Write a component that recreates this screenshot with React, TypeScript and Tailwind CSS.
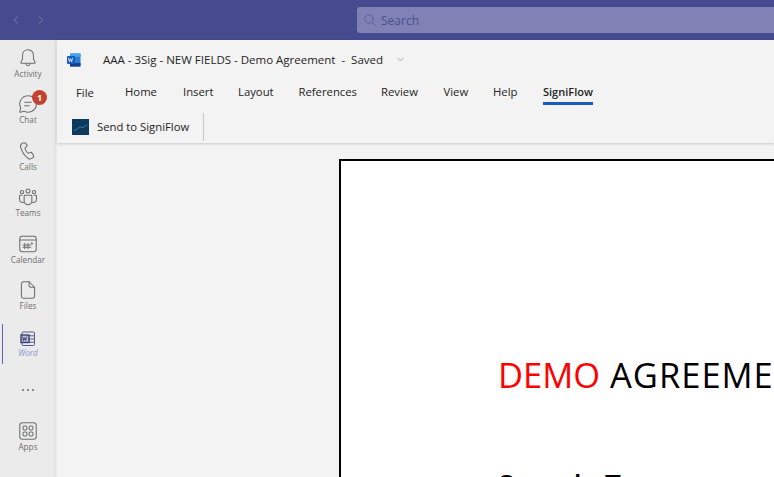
import React from 'react';
import { ChevronLeft, ChevronRight, ChevronDown } from 'lucide-react';

const NavIcon: React.FC<{ name: string }> = ({ name }) => {
  const common = {
    width: 22,
    height: 22,
    viewBox: '0 0 20 20',
    fill: 'none',
    stroke: '#6e6e6e',
    strokeWidth: 0.95,
    strokeLinecap: 'round' as const,
    strokeLinejoin: 'round' as const,
  };
  switch (name) {
    case 'Activity':
      return (
        <svg {...common}>
          <path d="M10 2.500c-3 0-5 2.300-5 5.200v3.300l-1.600 3.200c-.1.300.1.600.4.600h12.400c.3 0 .5-.3.4-.6L15 11V7.700c0-2.900-2-5.200-5-5.200z" />
          <path d="M8 15c.2 1.200 1 2 2 2s1.800-.8 2-2" />
        </svg>
      );
    case 'Chat':
      return (
        <svg {...common}>
          <path d="M10 2.500a7.500 7.500 0 0 0-6.600 11l-.9 3.600c-.1.300.2.500.4.400l3.600-1A7.500 7.500 0 1 0 10 2.500z" />
          <path d="M7 8.500h6M7 11.500h4" />
        </svg>
      );
    case 'Calls':
      return (
        <svg {...common}>
          <path d="M6 2.600 4.600 3.200C3.400 3.800 3 5 3.300 6.300c.8 3.600 3.700 8.100 6.700 10.300 1.100.8 2.400.9 3.400.1l1.300-1c.6-.5.7-1.300.3-1.900l-1.300-1.900c-.4-.6-1.100-.8-1.700-.5l-1.300.5c-.4.2-.9 0-1.200-.3-.9-1.100-1.700-2.400-2.200-3.800-.1-.4 0-.9.400-1.100l1-.8c.5-.4.700-1.100.4-1.700L7.900 3.300C7.500 2.700 6.700 2.300 6 2.600z" />
        </svg>
      );
    case 'Teams':
      return (
        <svg {...common}>
          <circle cx="10" cy="4.500" r="1.800" />
          <circle cx="4.500" cy="5.500" r="1.500" />
          <circle cx="15.500" cy="5.500" r="1.500" />
          <path d="M7 8.500h6a.5.5 0 0 1 .5.500v4.500a3.500 3.500 0 0 1-7 0V9a.5.5 0 0 1 .5-.500z" />
          <path d="M4.500 8.500H2.800a.5.5 0 0 0-.5.500v3.200a2.800 2.800 0 0 0 3.700 2.600M15.500 8.500h1.700a.5.5 0 0 1 .5.500v3.200a2.800 2.800 0 0 1-3.700 2.600" />
        </svg>
      );
    case 'Calendar':
      return (
        <svg {...common}>
          <rect x="2.500" y="3" width="15" height="14" rx="2.200" />
          <path d="M2.500 6.300h15" />
          <path d="M7 9.500v4.500M10 9.500v4.500M5.500 11h7M5.500 13h7" />
          <circle cx="13.500" cy="9.500" r=".5" fill="#6e6e6e" />
        </svg>
      );
    case 'Files':
      return (
        <svg {...common}>
          <path d="M6 2.500h5l5 5v8a2 2 0 0 1-2 2H6a2 2 0 0 1-2-2v-11a2 2 0 0 1 2-2z" />
          <path d="M11 2.500v3.500a1.500 1.500 0 0 0 1.500 1.500H16" />
        </svg>
      );
    case 'Word':
      return (
        <svg width="20" height="20" viewBox="0 0 20 20" fill="none">
          <rect x="4" y="3" width="12.500" height="13.500" rx="1" stroke="#55598f" strokeWidth="1" />
          <path d="M10 6.800h6.500M10 10h6.500M10 13.200h6.500" stroke="#55598f" strokeWidth="1" />
          <rect x="3" y="6" width="8" height="7.500" fill="#b9bcd9" stroke="#33366f" strokeWidth="1.300" />
          <path d="M4.500 7.800l1 3.800 1-2.800 1 2.800 1-3.800" stroke="#33366f" strokeWidth=".9" />
        </svg>
      );
    default:
      return (
        <svg {...common}>
          <rect x="2.500" y="2.500" width="15" height="15" rx="2.500" />
          <rect x="5.500" y="5.500" width="3.500" height="3.500" rx="1" />
          <rect x="11" y="5.500" width="3.500" height="3.500" rx="1" />
          <rect x="5.500" y="11" width="3.500" height="3.500" rx="1" />
          <rect x="11" y="11" width="3.500" height="3.500" rx="1" />
        </svg>
      );
  }
};

const NAV_ITEMS = ['Activity', 'Chat', 'Calls', 'Teams', 'Calendar', 'Files'];

const TABS = [
  { label: 'Home', width: 'w-[58px]' },
  { label: 'Insert', width: 'w-[55px]' },
  { label: 'Layout', width: 'w-[60.500px]' },
  { label: 'References', width: 'w-[82.500px]' },
  { label: 'Review', width: 'w-[62.500px]' },
  { label: 'View', width: 'w-[49.500px]' },
  { label: 'Help', width: 'w-[50px]' },
];

const WordLogo = () => (
  <svg width="14" height="14" viewBox="0 0 14 14">
    <rect x="3" y="0.500" width="10.500" height="13" rx="1" fill="#2b7cd3" />
    <rect x="3" y="0.500" width="10.500" height="3.300" fill="#41a5ee" />
    <rect x="3" y="10" width="10.500" height="3.500" fill="#103f91" />
    <rect x="0" y="3" width="8" height="8" rx="1" fill="#185abd" />
    <path d="M1.500 4.800l.9 4 1.100-3 1.100 3 .9-4" fill="none" stroke="#fff" strokeWidth=".8" />
  </svg>
);

const SigniFlowLogo = () => (
  <svg width="17" height="16" viewBox="0 0 17 16">
    <rect width="17" height="16" fill="#0f3a5c" />
    <path d="M2 11c2 .3 3-.6 5-2.500 1.500-1 2-.4 3 .1 1.500.4 3-2 5-3" fill="none" stroke="#2f8fd8" strokeWidth=".8" />
  </svg>
);

const App: React.FC = () => {
  return (
    <div className="flex h-[477px] w-[774px] flex-col overflow-hidden bg-[#f3f3f3] font-['Open_Sans','Noto_Sans',sans-serif] text-[#242424]">
      <header className="flex h-10 shrink-0 items-center bg-[#464a8f]">
        <div className="flex w-[357px] items-center gap-[11px] pl-[9px] text-[#7d80b5]">
          <ChevronLeft size={14} strokeWidth={1.500} />
          <ChevronRight size={14} strokeWidth={1.500} />
        </div>
        <div className="flex h-[26px] flex-1 items-center gap-[4px] rounded-l-[3px] bg-[#8081b4] pl-[6px] text-xs text-[#4c4f92]">
          <svg width="14" height="14" viewBox="0 0 14 14" fill="none" stroke="#5f629f" strokeWidth="1" strokeLinecap="round">
            <circle cx="6" cy="6" r="4.200" />
            <path d="M9.200 9.200l3.600 3.600" />
          </svg>
          <span className="mt-[1px]">Search</span>
        </div>
      </header>

      <div className="flex min-h-0 flex-1">
        <nav className="mr-[1px] flex w-[56px] shrink-0 flex-col items-center bg-[#ebebeb] pt-[6.500px] text-[8.200px] text-[#6f6f6f] shadow-[inset_-5px_0_3px_-3px_rgba(0,0,0,0.04),1px_0_0_#ebebeb]">
          {NAV_ITEMS.map(name => (
            <div key={name} className="relative flex h-[46.500px] w-full flex-col items-center">
              <NavIcon name={name} />
              <span className="mt-[-1px] leading-[11px]">{name}</span>
              {name === 'Chat' && (
                <span className="absolute left-[32px] top-[-3px] flex h-[15px] w-[15px] items-center justify-center rounded-full bg-[#c4412f] text-[9px] font-bold leading-none text-white">
                  1
                </span>
              )}
            </div>
          ))}
          <div className="relative flex h-[47.500px] w-full flex-col items-center pt-[3px]">
            <span className="absolute left-[2px] top-[-2px] h-10 w-px bg-[#5b5fc7]" />
            <NavIcon name="Word" />
            <span className="mt-[-2px] italic leading-[11px] text-[#8b95d6]">Word</span>
          </div>
          <div className="flex h-[47px] w-full items-start justify-center gap-[3px] pt-[16px]">
            <span className="h-[2px] w-[2px] rounded-full bg-[#6b6b6b]" />
            <span className="h-[2px] w-[2px] rounded-full bg-[#6b6b6b]" />
            <span className="h-[2px] w-[2px] rounded-full bg-[#6b6b6b]" />
          </div>
          <div className="flex flex-col items-center">
            <NavIcon name="Apps" />
            <span className="mt-[-1px] leading-[11px]">Apps</span>
          </div>
        </nav>

        <main className="flex min-w-0 flex-1 flex-col">
          <div className="relative z-10 flex h-[103px] shrink-0 flex-col bg-[#f3f3f3] shadow-[0_1px_3px_rgba(0,0,0,0.18)]">
            <div className="flex h-[40px] items-center pl-[10px] text-[11.500px]">
              <WordLogo />
              <span className="ml-[22px] whitespace-pre">AAA - 3Sig - NEW FIELDS - Demo Agreement  -  Saved</span>
              <ChevronDown size={11} strokeWidth={1.200} className="mb-[1px] ml-[12px] text-[#6b6b6b]" />
            </div>
            <div className="flex h-[28px] items-start pt-[4px] text-[11.300px]">
              <span className="w-[68px] pl-[19px] pt-[1px]">File</span>
              {TABS.map(tab => (
                <span key={tab.label} className={tab.width}>{tab.label}</span>
              ))}
              <span className="flex flex-col items-start text-[11px] font-semibold">
                SigniFlow
                <span className="mt-[1px] h-[3px] w-full bg-[#185abd]" />
              </span>
            </div>
            <div className="flex h-[35px] items-start pt-[5px]">
              <div className="flex h-[28px] items-center border-r border-[#c8c6c4] pl-[15px] pr-[14px] text-[11.300px]">
                <SigniFlowLogo />
                <span className="ml-[8px]">Send to SigniFlow</span>
              </div>
            </div>
          </div>

          <div className="flex min-h-0 flex-1 justify-start overflow-hidden pl-[282px] pt-[16px]">
            <div className="h-[400px] w-[600px] shrink-0 border-2 border-black bg-white pl-[157px] pt-[190px]">
              <p className="whitespace-nowrap text-[34.500px] leading-[48px] text-black">
                <span className="text-[#ff0000]">DEMO</span>{' '}
                <span className="ml-[1px] tracking-[1px]">AGREEMENT</span>
              </p>
              <p className="mt-[66px] whitespace-nowrap text-[28px] font-semibold leading-[40px] text-black">Sample Terms</p>
            </div>
          </div>
        </main>
      </div>
    </div>
  );
};

export default App;
